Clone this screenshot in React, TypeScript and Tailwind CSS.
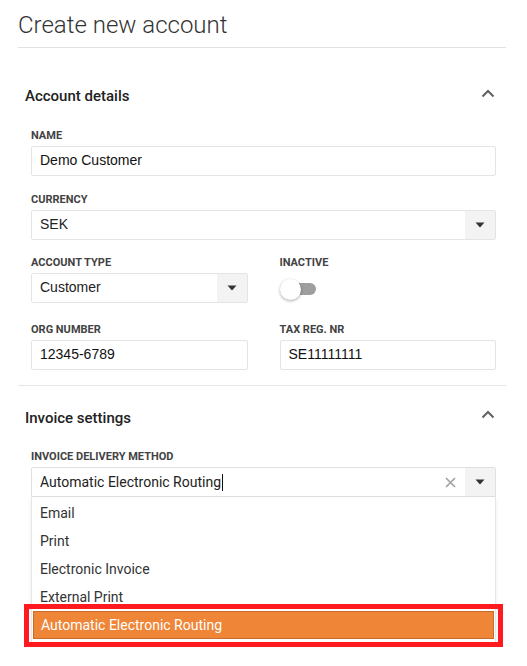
import React from "react";

const roboto = "font-['Roboto',sans-serif]";
const arial = "font-['Liberation_Sans',Arial,sans-serif]";

function ChevronUp() {
  return (
    <svg width="14" height="9" viewBox="0 0 14 9" className="text-[#616161]">
      <path d="M1.5 7.5L7 2L12.5 7.5" fill="none" stroke="currentColor" strokeWidth="2" />
    </svg>
  );
}

function Caret() {
  return (
    <svg width="10" height="6" viewBox="0 0 10 6" className="text-[#333]">
      <path d="M0.5 0.5H9.5L5 5.5Z" fill="currentColor" />
    </svg>
  );
}

function Label({ children }: { children: React.ReactNode }) {
  return (
    <div className={`${roboto} text-[11px] leading-[14px] font-bold uppercase text-[#424242] mb-[3px]`}>
      {children}
    </div>
  );
}

function TextInput({ value }: { value: string }) {
  return (
    <div className={`${arial} h-[30px] border border-[#e4e4e4] rounded-[2px] bg-white flex items-center px-[8px] text-[14px] text-[#111]`}>
      {value}
    </div>
  );
}

function Select({ value }: { value: string }) {
  return (
    <div className="h-[30px] border border-[#e4e4e4] rounded-[2px] bg-white flex items-stretch">
      <div className={`${arial} flex-1 flex items-center px-[8px] text-[14px] text-[#222]`}>{value}</div>
      <div className="w-[30px] bg-[#f3f3f3] flex items-center justify-center">
        <Caret />
      </div>
    </div>
  );
}

function SectionHeader({ title }: { title: string }) {
  return (
    <div className="flex items-center justify-between pl-[7px] pr-[11px] mb-[21px]">
      <h2 className={`${roboto} text-[15px] font-medium text-[#222]`}>{title}</h2>
      <div className="-mt-[6px]">
        <ChevronUp />
      </div>
    </div>
  );
}

const options = ["Email", "Print", "Electronic Invoice", "External Print"];

export default function App() {
  return (
    <div className="bg-white w-[527px] h-[666px] overflow-hidden">
      <div className="ml-[18px] w-[488px]">
        <h1 className={`${roboto} font-light text-[24px] leading-[28px] text-[#333] pt-[11px] pb-[8px] border-b border-[#e2e2e2]`}>
          Create new account
        </h1>

        <section className="pt-[37px] pb-[15px] border-b border-[#e6e6e6]">
          <SectionHeader title="Account details" />
          <div className="pl-[13px] pr-[10px] flex flex-col">
            <div className="mb-[17px]">
              <Label>Name</Label>
              <TextInput value="Demo Customer" />
            </div>
            <div className="mb-[16px]">
              <Label>Currency</Label>
              <Select value="SEK" />
            </div>
            <div className="grid grid-cols-2 gap-x-[32px] mb-[20px]">
              <div>
                <Label>Account type</Label>
                <Select value="Customer" />
              </div>
              <div>
                <Label>Inactive</Label>
                <div className="relative h-[30px] w-[38px]">
                  <div className="absolute left-[10px] top-[10px] w-[26px] h-[12px] rounded-full bg-[#9e9e9e]" />
                  <div className="absolute left-0 top-[6px] w-[21px] h-[21px] rounded-full bg-white shadow-[0_1px_3px_rgba(0,0,0,0.35)]" />
                </div>
              </div>
            </div>
            <div className="grid grid-cols-2 gap-x-[32px]">
              <div>
                <Label>Org number</Label>
                <TextInput value="12345-6789" />
              </div>
              <div>
                <Label>Tax reg. nr</Label>
                <TextInput value="SE11111111" />
              </div>
            </div>
          </div>
        </section>

        <section className="pt-[21px]">
          <SectionHeader title="Invoice settings" />
          <div className="pl-[13px] pr-[10px]">
            <Label>Invoice delivery method</Label>
            <div className="h-[30px] border border-[#e0e0e0] rounded-t-[2px] bg-white flex items-stretch">
              <div className={`${roboto} flex-1 flex items-center px-[8px] text-[14px] text-[#222]`}>
                Automatic Electronic Routing
                <span className="inline-block w-[1px] h-[17px] bg-[#111] ml-[1px]" />
              </div>
              <div className="w-[30px] flex items-center justify-center">
                <svg width="11" height="11" viewBox="0 0 11 11" className="text-[#a0a0a0]">
                  <path d="M1 1L10 10M10 1L1 10" stroke="currentColor" strokeWidth="1.6" />
                </svg>
              </div>
              <div className="w-[30px] bg-[#f3f3f3] flex items-center justify-center">
                <Caret />
              </div>
            </div>
            <div className="relative pt-[2px] border-x border-[#e6e6e6] bg-white shadow-[0_2px_4px_rgba(0,0,0,0.08)]">
              {options.map((o) => (
                <div key={o} className={`${roboto} h-[28px] flex items-center px-[8px] text-[14px] text-[#333]`}>
                  {o}
                </div>
              ))}
              <div className="h-[28px] mx-[1px] bg-[#ee8537] border border-[#c96b2c] flex items-center px-[7px]">
                <span className={`${roboto} text-[14px] text-white`}>Automatic Electronic Routing</span>
              </div>
              <div className="h-[3px]" />
              <div className="absolute left-[-8px] right-[-8px] top-[107px] h-[43px] border-[5px] border-[#ff1a1f] pointer-events-none" />
            </div>
          </div>
        </section>
      </div>
    </div>
  );
}
